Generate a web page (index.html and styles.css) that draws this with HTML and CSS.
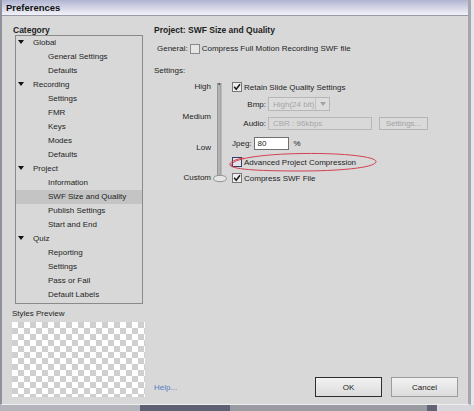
FILE: index.html
```html
<!DOCTYPE html>
<html>
<head>
<meta charset="utf-8">
<title>Preferences</title>
<link rel="stylesheet" href="styles.css">
</head>
<body>
<div class="screen">
  <div class="top">
    <div class="dialog">
      <div class="titlebar">Preferences</div>
      <div class="body">
        <div class="left">
          <div class="heading">Category</div>
          <div class="tree">
            <div class="node parent"><span class="tri"></span>Global</div>
            <div class="node child">General Settings</div>
            <div class="node child">Defaults</div>
            <div class="node parent"><span class="tri"></span>Recording</div>
            <div class="node child">Settings</div>
            <div class="node child">FMR</div>
            <div class="node child">Keys</div>
            <div class="node child">Modes</div>
            <div class="node child">Defaults</div>
            <div class="node parent"><span class="tri"></span>Project</div>
            <div class="node child">Information</div>
            <div class="node child sel">SWF Size and Quality</div>
            <div class="node child">Publish Settings</div>
            <div class="node child">Start and End</div>
            <div class="node parent"><span class="tri"></span>Quiz</div>
            <div class="node child">Reporting</div>
            <div class="node child">Settings</div>
            <div class="node child">Pass or Fail</div>
            <div class="node child">Default Labels</div>
          </div>
          <div class="preview-label">Styles Preview</div>
          <div class="checker"></div>
        </div>
        <div class="right">
          <div class="heading">Project: SWF Size and Quality</div>
          <div class="general-row">
            <span>General:</span>
            <span class="cb gen"></span>
            <span>Compress Full Motion Recording SWF file</span>
          </div>
          <div class="settings-label">Settings:</div>
          <div class="quality">
            <div class="levels">
              <span>High</span>
              <span>Medium</span>
              <span>Low</span>
              <span>Custom</span>
            </div>
            <svg class="slider" width="17" height="103" viewBox="0 0 17 103">
              <rect x="5.5" y="2.5" width="3.5" height="93" fill="#b2b2b2" stroke="#8e8e8e" stroke-width="0.8"/>
              <rect x="6.5" y="2" width="1.5" height="2" fill="#5a5a5a"/>
              <ellipse cx="8" cy="97.5" rx="6.5" ry="3.2" fill="#e6e6e6" stroke="#888" stroke-width="0.9"/>
            </svg>
            <div class="controls">
              <div class="crow r1">
                <span class="cb checked"><svg viewBox="0 0 8 8" width="8" height="8"><path d="M1.2 3.8 L3.2 6.2 L7 1.2" fill="none" stroke="#1a1a1a" stroke-width="1.5"/></svg></span>
                <span>Retain Slide Quality Settings</span>
              </div>
              <div class="crow r2">
                <span class="lbl">Bmp:</span>
                <span class="select"><span class="sel-text">High(24 bit)</span><span class="sel-btn"><svg viewBox="0 0 6 4" width="6" height="4"><path d="M0 0 H6 L3 4 Z" fill="#a2a2a2"/></svg></span></span>
              </div>
              <div class="crow r3">
                <span class="lbl">Audio:</span>
                <span class="input dis">CBR : 96kbps</span>
                <span class="btn-small">Settings...</span>
              </div>
              <div class="crow r4">
                <span>Jpeg:</span>
                <span class="jpeg">80</span>
                <span class="pct">%</span>
              </div>
              <div class="crow r5">
                <span class="cb focus"></span>
                <span>Advanced Project Compression</span>
              </div>
              <div class="crow r6">
                <span class="cb checked"><svg viewBox="0 0 8 8" width="8" height="8"><path d="M1.2 3.8 L3.2 6.2 L7 1.2" fill="none" stroke="#1a1a1a" stroke-width="1.5"/></svg></span>
                <span>Compress SWF File</span>
              </div>
              <svg class="annot" width="154" height="26" viewBox="0 0 154 26">
                <path d="M6 16 C 2 10, 30 4, 78 3.5 C 120 3, 152 7, 150 12 C 148 18, 112 21, 74 21 C 40 21, 6 20, 4 15 C 3 12, 10 9, 18 8" fill="none" stroke="#d2414f" stroke-width="1"/>
              </svg>
            </div>
          </div>
          <div class="footer">
            <span class="help">Help...</span>
            <div class="buttons">
              <button class="btn default">OK</button>
              <button class="btn">Cancel</button>
            </div>
          </div>
        </div>
      </div>
    </div>
    <div class="rstrip"></div>
  </div>
  <div class="bstrip"></div>
</div>
</body>
</html>
```
FILE: styles.css
```css
* { box-sizing: border-box; }
html, body { margin: 0; padding: 0; }
body {
  width: 474px;
  height: 411px;
  overflow: hidden;
  font-family: "Liberation Sans", Arial, sans-serif;
  font-size: 8px;
  color: #1e1e1e;
  background: #b8b8c0;
}
.screen { display: flex; flex-direction: column; width: 474px; height: 411px; }
.top { display: flex; height: 405px; }
.dialog {
  width: 471px;
  height: 405px;
  display: flex;
  flex-direction: column;
  background: #d8d8d8;
  border-left: 2px solid #8e909c;
  border-right: 3px solid #a6a6ae;
  border-bottom: 1px solid #eeeeee;
}
.titlebar {
  height: 16px;
  padding: 1px 0 0 4px;
  border-bottom: 1px solid #9a9aa6;
  background: linear-gradient(#b0b4d0, #d6d8e8 55%, #f2f2f8);
  font-weight: bold;
  font-size: 9.5px;
  line-height: 14px;
  color: #111;
}
.body { flex: 1; display: flex; }
.left {
  width: 144px;
  flex: none;
  padding: 9px 0 0 10px;
  display: flex;
  flex-direction: column;
}
.heading { font-weight: bold; font-size: 8.5px; line-height: 10px; height: 10px; white-space: nowrap; }
.left .heading { margin-left: 1px; }
.tree {
  margin-left: 3px;
  width: 128px;
  border: 1px solid #8a8a8a;
  padding-bottom: 1px;
}
.node { height: 14px; line-height: 14px; white-space: nowrap; }
.parent { padding-left: 2px; }
.child { padding-left: 32px; }
.sel { background: #c4c4c4; }
.tri {
  display: inline-block;
  width: 0;
  height: 0;
  border-left: 3px solid transparent;
  border-right: 3px solid transparent;
  border-top: 4px solid #111;
  margin-right: 9px;
  vertical-align: 1px;
}
.preview-label { margin-top: 5px; line-height: 10px; height: 10px; }
.checker {
  margin-top: 3px;
  width: 133px;
  height: 75px;
  background: repeating-conic-gradient(#cfcfcf 0 25%, #ffffff 0 50%) 0 0 / 12px 12px;
}
.right {
  flex: 1;
  display: flex;
  flex-direction: column;
  padding: 9px 10px 7px 8px;
}
.general-row {
  margin-top: 8px;
  margin-left: 3px;
  height: 12px;
  line-height: 12px;
  display: flex;
  align-items: center;
  white-space: nowrap;
}
.cb {
  width: 10px;
  height: 10px;
  flex: none;
  border: 1px solid #777;
  background: #eeeeee;
  display: flex;
  align-items: center;
  justify-content: center;
}
.cb.gen { margin: 0 2px; border-color: #8a8a8a; background: #e6e6e6; }
.cb.focus { border-color: #3a3a66; background: #e2e2ea; }
.settings-label { margin-top: 10px; height: 12px; line-height: 12px; }
.quality { margin-top: 4px; display: flex; height: 103px; }
.levels {
  width: 57px;
  flex: none;
  display: flex;
  flex-direction: column;
  justify-content: space-between;
  text-align: right;
}
.levels span { display: block; height: 12px; line-height: 12px; }
.slider { flex: none; margin-left: 1px; display: block; }
.controls {
  margin-left: 3px;
  flex: 1;
  display: flex;
  flex-direction: column;
  position: relative;
}
.crow { display: flex; align-items: center; white-space: nowrap; }
.crow .cb { margin-right: 2px; }
.r1 { height: 12px; }
.r2 { height: 14px; margin-top: 4px; }
.r3 { height: 13px; margin-top: 6px; }
.r4 { height: 13px; margin-top: 7px; }
.r5 { height: 12px; margin-top: 6px; }
.r6 { height: 12px; margin-top: 4px; }
.lbl { width: 34px; text-align: right; margin-right: 2px; flex: none; }
.select {
  width: 62px;
  height: 14px;
  border: 1px solid #b6b6b6;
  background: #dcdcdc;
  color: #a4a4a4;
  display: flex;
  align-items: center;
}
.sel-text { flex: 1; padding-left: 4px; }
.sel-btn {
  width: 14px;
  height: 12px;
  border-left: 1px solid #c2c2c2;
  display: flex;
  align-items: center;
  justify-content: center;
}
.sel-btn svg { display: block; }
.input {
  width: 104px;
  height: 13px;
  border: 1px solid #b8b8b8;
  background: #d9d9d9;
  color: #a8a8a8;
  padding-left: 4px;
  line-height: 11px;
}
.btn-small {
  margin-left: 7px;
  width: 49px;
  height: 13px;
  border: 1px solid #b4b4b4;
  background: #dadada;
  color: #a2a2a2;
  text-align: center;
  line-height: 11px;
}
.jpeg {
  margin-left: 2px;
  width: 35px;
  height: 13px;
  border: 1px solid #707070;
  background: #ffffff;
  padding-left: 3px;
  line-height: 11px;
}
.pct { margin-left: 5px; }
.annot {
  position: absolute;
  left: -6px;
  top: 69px;
  overflow: visible;
}
.footer {
  margin-top: auto;
  height: 20px;
  display: flex;
  align-items: center;
}
.help { color: #5a7ac2; }
.buttons { margin-left: auto; display: flex; gap: 9px; }
.btn {
  width: 67px;
  height: 20px;
  padding: 0;
  border: 1px solid #9c9c9c;
  background: linear-gradient(#f2f2f2, #dcdcdc);
  font-family: "Liberation Sans", Arial, sans-serif;
  font-size: 8px;
  color: #222;
}
.btn.default { border-color: #2e2e2e; }
.rstrip { flex: 1; background: #e6e6ec; }
.bstrip {
  height: 6px;
  background: linear-gradient(90deg, #b4b4bc 0 140px, #5c6072 140px 230px, #9a9aa2 230px 427px, #606474 427px 437px, #d6d6dc 437px);
}
```
